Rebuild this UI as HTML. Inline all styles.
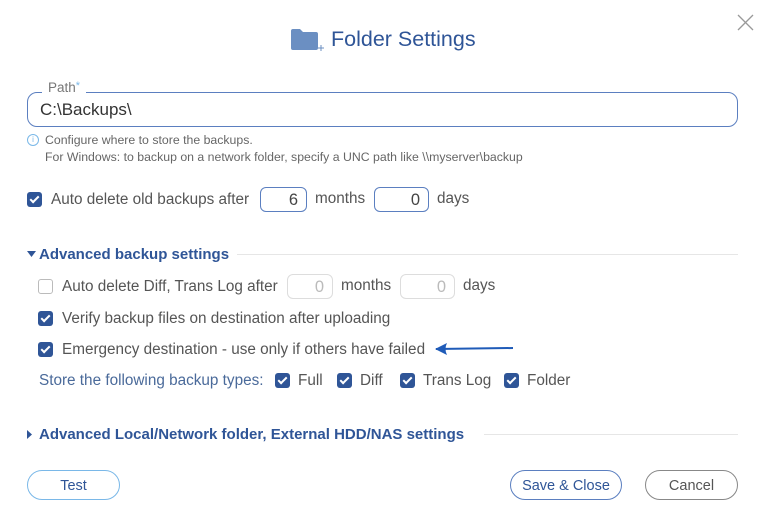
<!DOCTYPE html>
<html><head><style>
*{margin:0;padding:0;box-sizing:border-box}
body{width:768px;height:525px;background:#fff;font-family:"Liberation Sans",sans-serif;position:relative;overflow:hidden;color:#4a4a4a}
.a{position:absolute;white-space:nowrap}
.cb{position:absolute;width:15px;height:15px;border-radius:3px;background:#2f5597}
.cb::after{content:"";position:absolute;left:5px;top:2px;width:3px;height:7px;border:solid #fff;border-width:0 2px 2px 0;transform:rotate(45deg)}
.cb.off{background:#fff;border:1px solid #bbb}
.cb.off::after{display:none}
.in{position:absolute;border:1px solid #5b7fc0;border-radius:6px;text-align:right;padding-right:8px;font-size:16.5px;line-height:25px;color:#444}
.in.dis{border-color:#ddd;color:#bbb}
.t{font-size:15.3px;letter-spacing:0;color:#555}
.h{font-size:15px;font-weight:bold;color:#2f5597;letter-spacing:0}
.btn{position:absolute;height:30px;border-radius:15px;border:1px solid #5b7fc0;text-align:center;line-height:30px;font-size:14.5px;color:#2f5597}
</style></head><body>
<svg class="a" style="left:290px;top:28px" width="36" height="24" viewBox="0 0 36 24"><path d="M1 3q0-2 2-2h7l3 3h13q2 0 2 2v14q0 2-2 2H3q-2 0-2-2z" fill="#6b8fc2"/><path d="M31 17v6M28 20h6" stroke="#6b8fc2" stroke-width="1"/></svg>
<div class="a" style="left:331px;top:27px;font-size:21.5px;color:#2f5597">Folder Settings</div>
<svg class="a" style="left:737px;top:14px" width="17" height="17"><path d="M1 1L16 16M16 1L1 16" stroke="#999" stroke-width="1.3"/></svg>

<div class="a" style="left:27px;top:92px;width:711px;height:35px;border:1px solid #5b7fc0;border-radius:10px"></div>
<div class="a" style="left:42px;top:80px;background:#fff;padding:0 6px;font-size:13.5px;color:#777">Path<span style="color:#7ab8e8;font-size:11px;vertical-align:top">*</span></div>
<div class="a" style="left:40px;top:100px;font-size:17px;color:#333">C:\Backups\</div>
<div class="a" style="left:27px;top:134px;width:12px;height:12px;border:1px solid #7ab8e8;border-radius:50%;font-size:8px;color:#7ab8e8;text-align:center;line-height:10px">i</div>
<div class="a" style="left:45px;top:133px;font-size:12.3px;color:#666">Configure where to store the backups.</div>
<div class="a" style="left:45px;top:150px;font-size:12.3px;color:#666">For Windows: to backup on a network folder, specify a UNC path like \\myserver\backup</div>

<div class="cb" style="left:27px;top:192px"></div>
<div class="a t" style="left:51px;top:191px">Auto delete old backups after</div>
<div class="in" style="left:260px;top:187px;width:47px;height:25px">6</div>
<div class="a t" style="left:315px;top:190px">months</div>
<div class="in" style="left:374px;top:187px;width:55px;height:25px">0</div>
<div class="a t" style="left:437px;top:190px">days</div>

<svg class="a" style="left:27px;top:251px" width="9" height="6"><path d="M0 0h9L4.5 6z" fill="#2f5597"/></svg>
<div class="a h" style="left:39px;top:246px">Advanced backup settings</div>
<div class="a" style="left:237px;top:254px;width:501px;height:1px;background:#e6e6e6"></div>

<div class="cb off" style="left:38px;top:279px"></div>
<div class="a t" style="left:62px;top:278px">Auto delete Diff, Trans Log after</div>
<div class="in dis" style="left:287px;top:274px;width:46px;height:25px">0</div>
<div class="a t" style="left:341px;top:277px">months</div>
<div class="in dis" style="left:400px;top:274px;width:55px;height:25px">0</div>
<div class="a t" style="left:463px;top:277px">days</div>

<div class="cb" style="left:38px;top:311px"></div>
<div class="a t" style="left:62px;top:310px">Verify backup files on destination after uploading</div>
<div class="cb" style="left:38px;top:342px"></div>
<div class="a t" style="left:62px;top:341px">Emergency destination - use only if others have failed</div>
<svg class="a" style="left:433px;top:342px" width="84" height="14"><path d="M3 7L80 6" stroke="#1f5bb8" stroke-width="2"/><path d="M2 7L14 1Q11 7 14 13z" fill="#1f5bb8"/></svg>

<div class="a t" style="left:39px;top:372px;color:#4a6a9a">Store the following backup types:</div>
<div class="cb" style="left:275px;top:373px"></div><div class="a t" style="left:298px;top:372px">Full</div>
<div class="cb" style="left:337px;top:373px"></div><div class="a t" style="left:360px;top:372px">Diff</div>
<div class="cb" style="left:400px;top:373px"></div><div class="a t" style="left:423px;top:372px">Trans Log</div>
<div class="cb" style="left:504px;top:373px"></div><div class="a t" style="left:527px;top:372px">Folder</div>

<svg class="a" style="left:27px;top:430px" width="6" height="9"><path d="M0 0v9L5 4.5z" fill="#2f5597"/></svg>
<div class="a h" style="left:39px;top:426px">Advanced Local/Network folder, External HDD/NAS settings</div>
<div class="a" style="left:484px;top:434px;width:254px;height:1px;background:#e6e6e6"></div>

<div class="btn" style="left:27px;top:470px;width:93px;border-color:#7ab8e8">Test</div>
<div class="btn" style="left:510px;top:470px;width:112px">Save &amp; Close</div>
<div class="btn" style="left:645px;top:470px;width:93px;border-color:#888;color:#555">Cancel</div>
</body></html>
